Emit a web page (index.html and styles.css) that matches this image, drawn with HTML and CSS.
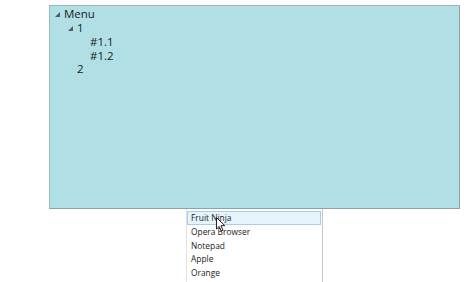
FILE: index.html
```html
<!DOCTYPE html>
<html>
<head>
<meta charset="utf-8">
<link rel="stylesheet" href="styles.css">
</head>
<body>
<div class="panel">
  <ul class="tree">
    <li>
      <div class="node"><svg class="exp" width="5" height="5" viewBox="0 0 5 5"><polygon points="5,0 5,5 0,5" fill="#595959"/></svg><span>Menu</span></div>
      <ul>
        <li>
          <div class="node"><svg class="exp" width="5" height="5" viewBox="0 0 5 5"><polygon points="5,0 5,5 0,5" fill="#595959"/></svg><span>1</span></div>
          <ul>
            <li><div class="node"><span class="noexp"></span><span>#1.1</span></div></li>
            <li><div class="node"><span class="noexp"></span><span>#1.2</span></div></li>
          </ul>
        </li>
        <li><div class="node"><span class="noexp"></span><span>2</span></div></li>
      </ul>
    </li>
  </ul>
</div>
<div class="dropdown">
  <div class="item sel">Fruit Ninja</div>
  <div class="item">Opera Browser</div>
  <div class="item">Notepad</div>
  <div class="item">Apple</div>
  <div class="item">Orange</div>
  <svg class="cursor" width="10" height="16" viewBox="0 0 10 16"><path d="M0.5,0.5 L0.5,12 L3.2,9.4 L5.2,14 L7,13.2 L5,8.7 L8.8,8.7 Z" fill="#fff" stroke="#222" stroke-width="1"/></svg>
</div>
</body>
</html>
```
FILE: styles.css
```css
html, body {
  margin: 0;
  padding: 0;
  background: #fff;
  font-family: "Open Sans", "Noto Sans", sans-serif;
}
.panel {
  margin: 5px 0 0 49px;
  width: 409px;
  height: 202px;
  background: #b0e0e6;
  border: 1px solid #9fb4b8;
  border-right-color: #8fa3a6;
  border-bottom-color: #8fa3a6;
}
.tree, .tree ul {
  list-style: none;
  margin: 0;
  padding: 0;
}
.tree {
  padding: 1px 0 0 4px;
}
.tree ul {
  padding-left: 13px;
}
.node {
  display: flex;
  align-items: center;
  height: 13.75px;
  line-height: 13px;
  font-size: 11.5px;
  color: #1a1a1a;
}
.exp {
  width: 5px;
  height: 5px;
  margin: 1px 4px 0 1px;
  flex: none;
}
.noexp {
  width: 10px;
  flex: none;
}
.dropdown {
  position: relative;
  margin-left: 186px;
  width: 135px;
  height: 73px;
  border-left: 1px solid #e3e3e3;
  border-right: 1px solid #c8c8c8;
  padding-top: 1px;
}
.item {
  height: 13.75px;
  line-height: 13.75px;
  font-size: 8.4px;
  padding-left: 4px;
  color: #1a1a1a;
  box-sizing: border-box;
}
.item.sel {
  background: #e5f3fb;
  border: 1px solid #a5cdee;
  line-height: 11.75px;
  padding-left: 3px;
  margin-right: 1px;
  margin-top: 1px;
}
.cursor {
  position: absolute;
  left: 29px;
  top: 8px;
}
```
